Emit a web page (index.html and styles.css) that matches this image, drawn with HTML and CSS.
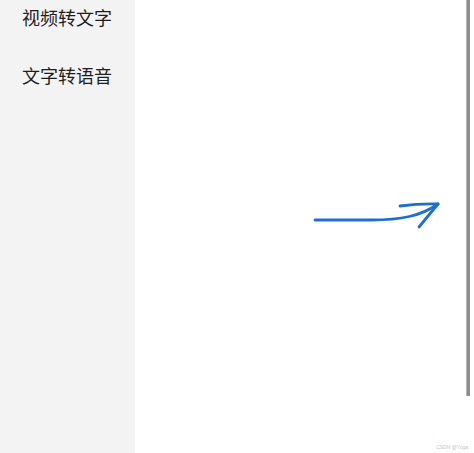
FILE: index.html
```html
<!DOCTYPE html>
<html lang="zh">
<head>
<meta charset="utf-8">
<link rel="stylesheet" href="styles.css">
</head>
<body>
<div class="app">
  <nav class="sidebar">
    <div class="item">视频转文字</div>
    <div class="item">文字转语音</div>
  </nav>
  <main class="main">
    <svg class="arrow" width="130" height="32" viewBox="0 0 130 32">
      <path d="M2 20 L58 20 C88 20 108 16 125 4" />
      <path d="M87 6 Q106 3.5 125 4" />
      <path d="M125 4 L106 27" />
    </svg>
  </main>
  <div class="scroll"><div class="thumb"></div></div>
  <div class="edge"></div>
  <div class="watermark">CSDN @Yoga</div>
</div>
</body>
</html>
```
FILE: styles.css
```css
html, body {
  margin: 0;
  padding: 0;
  background: #ffffff;
}
.app {
  position: relative;
  display: flex;
  height: 453px;
  font-family: "Noto Sans CJK SC", "Noto Sans", sans-serif;
}
.sidebar {
  width: 135px;
  flex: none;
  background: #f3f3f3;
  padding-top: 5px;
  display: flex;
  flex-direction: column;
  gap: 34px;
  box-sizing: border-box;
}
.item {
  padding-left: 22px;
  font-size: 18px;
  line-height: 24px;
  color: #1e1e1e;
}
.main {
  flex: 1;
  padding: 200px 0 0 178px;
}
.arrow {
  display: block;
  fill: none;
  stroke: #1f6fcf;
  stroke-width: 2.8;
  stroke-linecap: round;
  stroke-linejoin: round;
}
.scroll {
  width: 4px;
  flex: none;
}
.thumb {
  height: 396px;
  background: #8c8c8c;
  border-left: 1px solid #b5b5b5;
  box-sizing: border-box;
}
.edge {
  width: 4px;
  flex: none;
}
.watermark {
  position: absolute;
  right: 6px;
  bottom: 3px;
  font-family: "Liberation Sans", sans-serif;
  font-size: 5px;
  color: #c4c4c4;
}
```
